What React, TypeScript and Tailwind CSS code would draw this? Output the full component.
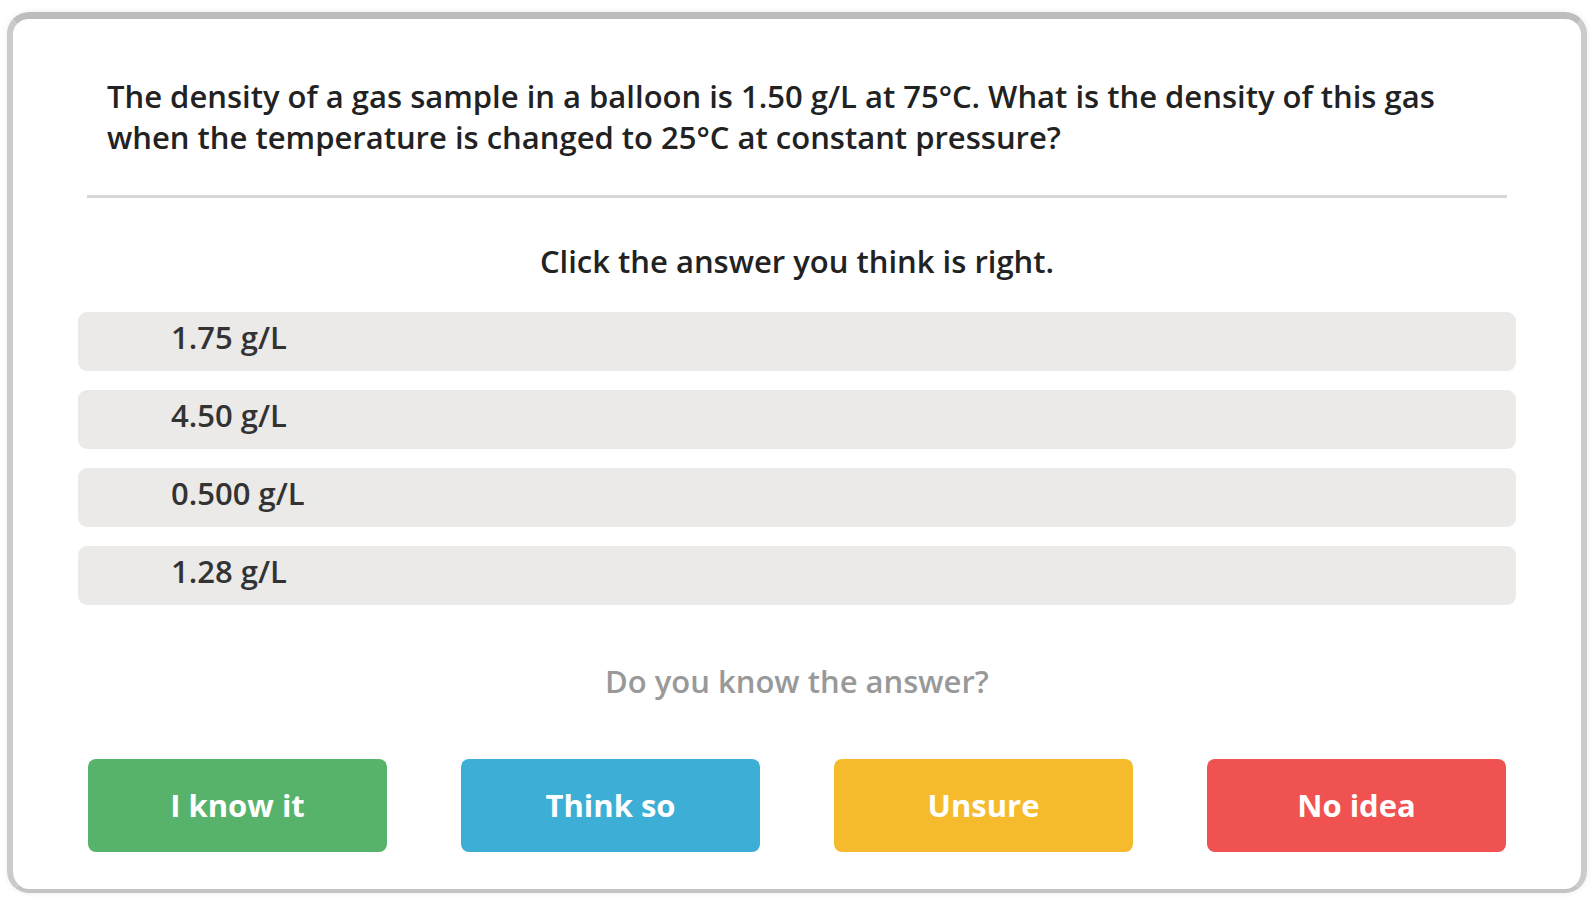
import React from "react";

const answers = ["1.75 g/L", "4.50 g/L", "0.500 g/L", "1.28 g/L"];

const confidence = [
  { label: "I know it", color: "bg-[#57b36b]" },
  { label: "Think so", color: "bg-[#3daed6]" },
  { label: "Unsure", color: "bg-[#f5bb2c]" },
  { label: "No idea", color: "bg-[#f05252]" },
];

export default function App() {
  return (
    <div className="w-[1596px] h-[900px] bg-white pt-[12px] pl-[7px] font-['Open_Sans',sans-serif]">
      <div className="w-[1580px] h-[881px] rounded-[22px] border-x-[6px] border-t-[7px] border-b-[4px] border-x-[#cbcbcb] border-t-[#bdbdbd] border-b-[#c4c4c4] bg-white shadow-[0_0_6px_rgba(0,0,0,0.08)]">
        <p className="pl-[94px] pr-[74px] pt-[57px] text-[31px] leading-[41px] font-semibold text-[#222]">
          The density of a gas sample in a balloon is 1.50 g/L at 75°C. What is
          the density of this gas when the temperature is changed to 25°C at
          constant pressure?
        </p>

        <div className="mx-[74px] mt-[37px] h-[3px] bg-[#d6d8d8]" />

        <h2 className="mt-[45px] text-center text-[31px] leading-[36px] font-semibold text-[#222]">
          Click the answer you think is right.
        </h2>

        <div className="mx-[65px] mt-[33px] flex flex-col gap-[19px]">
          {answers.map((a) => (
            <button
              key={a}
              className="h-[59px] rounded-[9px] bg-[#ebeae8] pl-[93px] pb-[8px] text-left text-[31px] font-semibold text-[#333]"
            >
              {a}
            </button>
          ))}
        </div>

        <p className="mt-[58px] text-center text-[31px] leading-[36px] font-semibold text-[#999]">
          Do you know the answer?
        </p>

        <div className="mt-[60px] px-[75px] grid grid-cols-4 gap-[74px]">
          {confidence.map((c) => (
            <button
              key={c.label}
              className={`h-[93px] rounded-[8px] ${c.color} text-[31px] font-bold text-white`}
            >
              {c.label}
            </button>
          ))}
        </div>
      </div>
    </div>
  );
}
